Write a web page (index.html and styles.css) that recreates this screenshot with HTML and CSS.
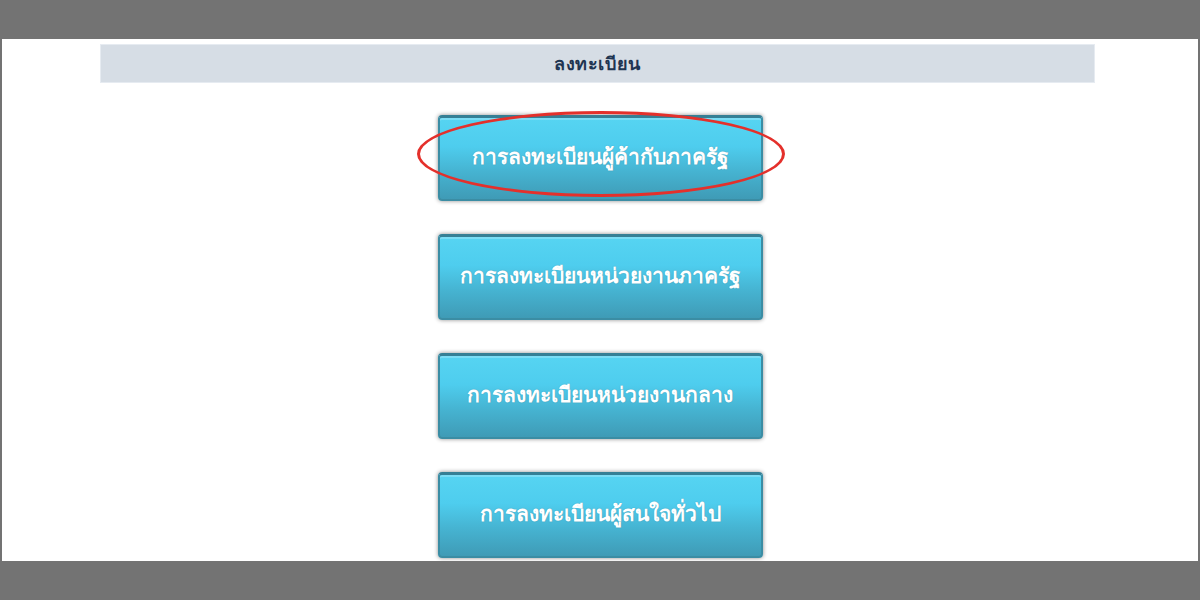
FILE: index.html
```html
<!DOCTYPE html>
<html lang="th">
<head>
<meta charset="utf-8">
<title>ลงทะเบียน</title>
<link rel="stylesheet" href="styles.css">
</head>
<body>
<div class="panel">
  <div class="header">ลงทะเบียน</div>
  <div class="buttons">
    <div class="btn-wrap">
      <a class="btn" href="#">การลงทะเบียนผู้ค้ากับภาครัฐ</a>
      <span class="ring"></span>
    </div>
    <div class="btn-wrap"><a class="btn" href="#">การลงทะเบียนหน่วยงานภาครัฐ</a></div>
    <div class="btn-wrap"><a class="btn" href="#">การลงทะเบียนหน่วยงานกลาง</a></div>
    <div class="btn-wrap"><a class="btn" href="#">การลงทะเบียนผู้สนใจทั่วไป</a></div>
  </div>
</div>
</body>
</html>
```
FILE: styles.css
```css
html, body {
  margin: 0;
  padding: 0;
  background: #737373;
  height: 600px;
  overflow: hidden;
}
body {
  font-family: "Noto Sans", "DejaVu Sans", sans-serif;
}
.panel {
  margin: 39px 2px 0 2px;
  height: 522px;
  background: #ffffff;
  padding-top: 5px;
  box-sizing: border-box;
  overflow: hidden;
}
.header {
  margin-left: 98px;
  width: 995px;
  height: 39px;
  box-sizing: border-box;
  background: #d6dde5;
  border: 1px solid #e6ebf1;
  display: flex;
  align-items: center;
  justify-content: center;
  font-weight: bold;
  font-size: 18px;
  letter-spacing: 0.6px;
  color: #1f3552;
}
.buttons {
  display: flex;
  flex-direction: column;
  align-items: center;
  gap: 33px;
  padding-top: 32px;
}
.btn-wrap {
  position: relative;
  width: 325px;
  height: 86px;
}
.btn {
  display: flex;
  align-items: center;
  justify-content: center;
  width: 100%;
  height: 100%;
  box-sizing: border-box;
  padding-bottom: 5px;
  border-radius: 4px;
  border: 2px solid #3b8da4;
  border-top: 3px solid #357f95;
  background: linear-gradient(to bottom, #56d4f2 0%, #4ecdee 35%, #46b4d2 65%, #3f9bb6 100%);
  box-shadow: 0 0 4px rgba(0, 0, 0, 0.45), inset 0 2px 0 rgba(255, 255, 255, 0.22);
  color: #ffffff;
  font-weight: bold;
  font-size: 21px;
  text-decoration: none;
  text-shadow: 0 0 1px rgba(0, 60, 80, 0.4);
}
.ring {
  position: absolute;
  left: -21px;
  top: -4px;
  width: 362px;
  height: 80px;
  border: 3px solid #e4302b;
  border-radius: 50%;
  pointer-events: none;
}
```
